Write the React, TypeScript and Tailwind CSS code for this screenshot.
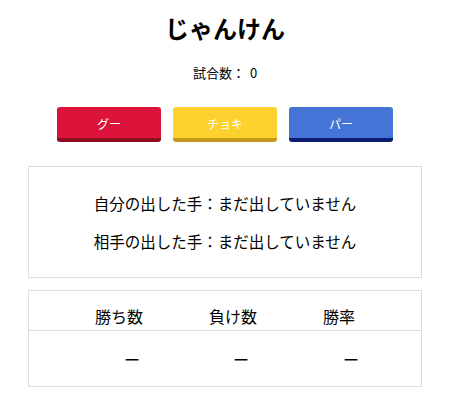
const FONT = { fontFamily: '"Noto Sans CJK JP", "Noto Sans", sans-serif' }

const HANDS = [
  { label: 'グー', cls: 'bg-[#dc143c] border-[#8a0d22]' },
  { label: 'チョキ', cls: 'bg-[#fdd22f] border-[#c49a1c]' },
  { label: 'パー', cls: 'bg-[#4474d6] border-[#0c1c70]' },
]

const STATS = [
  { head: '勝ち数', w: 'w-[114px]', dash: 'pl-[26px]' },
  { head: '負け数', w: 'w-[114px]', dash: 'pl-[16px]' },
  { head: '勝率', w: 'w-[98px]', dash: 'pl-[24px]' },
]

export default function App() {
  return (
    <div className="w-[450px] bg-white text-black" style={FONT}>
      <h1 className="pt-[12px] text-center text-[24px] font-bold leading-[32px]">じゃんけん</h1>
      <p className="mt-[19px] text-center text-[13px] leading-[20px]">
        試合数：<span className="ml-[5px]">0</span>
      </p>

      {/* hand buttons */}
      <div className="mt-[24px] flex justify-center gap-[12px]">
        {HANDS.map(h => (
          <button
            key={h.label}
            className={`h-[35px] w-[104px] rounded-[3px] border-b-[4px] pt-[2px] text-[12px] text-white ${h.cls}`}
          >
            {h.label}
          </button>
        ))}
      </div>

      {/* hands played */}
      <div className="mx-[28px] mt-[24px] flex h-[112px] flex-col items-center justify-center gap-[16px] border border-[#dcdcdc] text-[15.5px] leading-[22px]">
        <p>自分の出した手：まだ出していません</p>
        <p>相手の出した手：まだ出していません</p>
      </div>

      {/* score table */}
      <div className="mx-[28px] mt-[12px] h-[97px] border border-[#dcdcdc] text-[16px]">
        <div className="flex h-[40px] items-end justify-center border-b border-[#dcdcdc] pb-[2px]">
          {STATS.map(s => (
            <div key={s.head} className={`${s.w} text-center leading-[24px]`}>{s.head}</div>
          ))}
        </div>
        <div className="flex h-[55px] items-center justify-center">
          {STATS.map(s => (
            <div key={s.head} className={`${s.w} text-center leading-[24px] ${s.dash}`}>ー</div>
          ))}
        </div>
      </div>
    </div>
  )
}
